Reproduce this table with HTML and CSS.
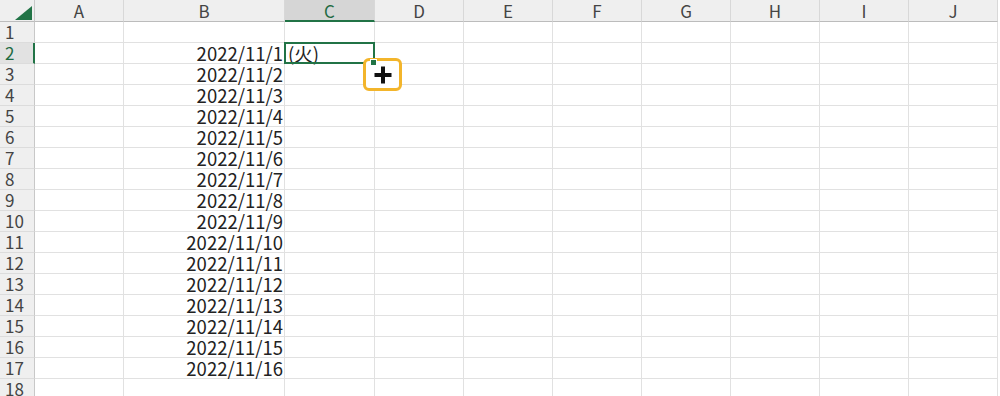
FILE: index.html
```html
<!DOCTYPE html>
<html lang="ja">
<head>
<meta charset="utf-8">
<title>Sheet</title>
<link rel="stylesheet" href="styles.css">
</head>
<body>
<div class="sheet">
  <div class="row head">
    <div class="corner"><svg width="35" height="22" viewBox="0 0 35 22"><polygon points="15,20 32,6 32,20" fill="#217346"/></svg></div>
    <div class="ch">A</div><div class="ch">B</div><div class="ch sel">C</div><div class="ch">D</div><div class="ch">E</div><div class="ch">F</div><div class="ch">G</div><div class="ch">H</div><div class="ch">I</div><div class="ch">J</div>
  </div>
  <div class="row"><div class="rh">1</div><div class="c"></div><div class="c"></div><div class="c"></div><div class="c"></div><div class="c"></div><div class="c"></div><div class="c"></div><div class="c"></div><div class="c"></div><div class="c"></div></div>
  <div class="row"><div class="rh sel">2</div><div class="c"></div><div class="c num">2022/11/1</div><div class="c active">(火)<span class="handle"></span><span class="cursor"><svg width="20" height="20" viewBox="0 0 20 20"><path d="M10 1.5v17M1.5 10h17" stroke="#111" stroke-width="4"/></svg></span></div><div class="c"></div><div class="c"></div><div class="c"></div><div class="c"></div><div class="c"></div><div class="c"></div><div class="c"></div></div>
  <div class="row"><div class="rh">3</div><div class="c"></div><div class="c num">2022/11/2</div><div class="c"></div><div class="c"></div><div class="c"></div><div class="c"></div><div class="c"></div><div class="c"></div><div class="c"></div><div class="c"></div></div>
  <div class="row"><div class="rh">4</div><div class="c"></div><div class="c num">2022/11/3</div><div class="c"></div><div class="c"></div><div class="c"></div><div class="c"></div><div class="c"></div><div class="c"></div><div class="c"></div><div class="c"></div></div>
  <div class="row"><div class="rh">5</div><div class="c"></div><div class="c num">2022/11/4</div><div class="c"></div><div class="c"></div><div class="c"></div><div class="c"></div><div class="c"></div><div class="c"></div><div class="c"></div><div class="c"></div></div>
  <div class="row"><div class="rh">6</div><div class="c"></div><div class="c num">2022/11/5</div><div class="c"></div><div class="c"></div><div class="c"></div><div class="c"></div><div class="c"></div><div class="c"></div><div class="c"></div><div class="c"></div></div>
  <div class="row"><div class="rh">7</div><div class="c"></div><div class="c num">2022/11/6</div><div class="c"></div><div class="c"></div><div class="c"></div><div class="c"></div><div class="c"></div><div class="c"></div><div class="c"></div><div class="c"></div></div>
  <div class="row"><div class="rh">8</div><div class="c"></div><div class="c num">2022/11/7</div><div class="c"></div><div class="c"></div><div class="c"></div><div class="c"></div><div class="c"></div><div class="c"></div><div class="c"></div><div class="c"></div></div>
  <div class="row"><div class="rh">9</div><div class="c"></div><div class="c num">2022/11/8</div><div class="c"></div><div class="c"></div><div class="c"></div><div class="c"></div><div class="c"></div><div class="c"></div><div class="c"></div><div class="c"></div></div>
  <div class="row"><div class="rh">10</div><div class="c"></div><div class="c num">2022/11/9</div><div class="c"></div><div class="c"></div><div class="c"></div><div class="c"></div><div class="c"></div><div class="c"></div><div class="c"></div><div class="c"></div></div>
  <div class="row"><div class="rh">11</div><div class="c"></div><div class="c num">2022/11/10</div><div class="c"></div><div class="c"></div><div class="c"></div><div class="c"></div><div class="c"></div><div class="c"></div><div class="c"></div><div class="c"></div></div>
  <div class="row"><div class="rh">12</div><div class="c"></div><div class="c num">2022/11/11</div><div class="c"></div><div class="c"></div><div class="c"></div><div class="c"></div><div class="c"></div><div class="c"></div><div class="c"></div><div class="c"></div></div>
  <div class="row"><div class="rh">13</div><div class="c"></div><div class="c num">2022/11/12</div><div class="c"></div><div class="c"></div><div class="c"></div><div class="c"></div><div class="c"></div><div class="c"></div><div class="c"></div><div class="c"></div></div>
  <div class="row"><div class="rh">14</div><div class="c"></div><div class="c num">2022/11/13</div><div class="c"></div><div class="c"></div><div class="c"></div><div class="c"></div><div class="c"></div><div class="c"></div><div class="c"></div><div class="c"></div></div>
  <div class="row"><div class="rh">15</div><div class="c"></div><div class="c num">2022/11/14</div><div class="c"></div><div class="c"></div><div class="c"></div><div class="c"></div><div class="c"></div><div class="c"></div><div class="c"></div><div class="c"></div></div>
  <div class="row"><div class="rh">16</div><div class="c"></div><div class="c num">2022/11/15</div><div class="c"></div><div class="c"></div><div class="c"></div><div class="c"></div><div class="c"></div><div class="c"></div><div class="c"></div><div class="c"></div></div>
  <div class="row"><div class="rh">17</div><div class="c"></div><div class="c num">2022/11/16</div><div class="c"></div><div class="c"></div><div class="c"></div><div class="c"></div><div class="c"></div><div class="c"></div><div class="c"></div><div class="c"></div></div>
  <div class="row"><div class="rh">18</div><div class="c"></div><div class="c"></div><div class="c"></div><div class="c"></div><div class="c"></div><div class="c"></div><div class="c"></div><div class="c"></div><div class="c"></div><div class="c"></div></div>
</div>
</body>
</html>
```

FILE: styles.css
```css
html, body {
  margin: 0;
  padding: 0;
  background: #fff;
  overflow: hidden;
}
body {
  width: 1000px;
  height: 396px;
  font-family: "Noto Sans CJK JP", "Noto Sans", sans-serif;
  color: #222;
}
.sheet {
  display: flex;
  flex-direction: column;
}
.row {
  display: grid;
  grid-template-columns: 35px 89px 161px 90px 89px 89px 89px 89px 89px 89px 89px 12px;
  height: 21px;
}
.row.head {
  height: 22px;
}
.corner {
  background: #efefef;
  border-right: 1px solid #c8c8c8;
  border-bottom: 1px solid #bcbcbc;
  box-sizing: border-box;
  height: 22px;
}
.corner svg { display: block; }
.ch {
  box-sizing: border-box;
  height: 22px;
  background: #efefef;
  border-right: 1px solid #d8d8d8;
  border-bottom: 1px solid #bcbcbc;
  font-size: 17px;
  line-height: 21px;
  text-align: center;
  color: #444;
}
.ch.sel {
  background: #d6d6d6;
  color: #1f6b42;
  border-bottom: 2px solid #217346;
}
.rh {
  box-sizing: border-box;
  background: #efefef;
  border-right: 1px solid #c8c8c8;
  border-bottom: 1px solid #dcdcdc;
  font-size: 17px;
  line-height: 20px;
  padding-left: 5px;
  color: #444;
}
.rh.sel {
  background: #e2e2e2;
  color: #1f6b42;
  border-right: 2px solid #217346;
}
.c {
  box-sizing: border-box;
  border-right: 1px solid #e1e1e1;
  border-bottom: 1px solid #e1e1e1;
  font-size: 18.5px;
  line-height: 20px;
  white-space: nowrap;
  overflow: visible;
}
.num {
  text-align: right;
  padding-right: 1px;
}
.active {
  position: relative;
  padding-left: 3px;
}
.active::after {
  content: "";
  position: absolute;
  left: -1px;
  top: -1px;
  right: -1px;
  bottom: -1px;
  border: 2px solid #217346;
  pointer-events: none;
}
.handle {
  position: absolute;
  right: -3px;
  bottom: -3px;
  width: 5px;
  height: 5px;
  background: #217346;
  border: 1px solid #fff;
  z-index: 2;
}
.cursor {
  position: absolute;
  left: 78px;
  top: 15px;
  width: 39px;
  height: 33px;
  box-sizing: border-box;
  border: 3px solid #f3b52b;
  border-radius: 6px;
  background: #fff;
  display: flex;
  align-items: center;
  justify-content: center;
  z-index: 1;
}
.cursor svg { display: block; }
```
